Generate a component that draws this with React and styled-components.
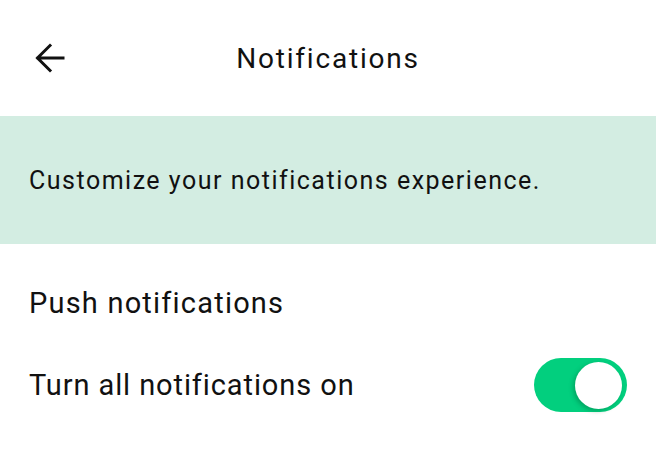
import styled, { createGlobalStyle } from "styled-components";

const GlobalStyle = createGlobalStyle`
  body {
    margin: 0;
    background: #fff;
    font-family: Roboto, "Liberation Sans", sans-serif;
    color: #111;
  }
`;

const Screen = styled.div`
  display: flex;
  flex-direction: column;
  width: 656px;
  height: 476px;
  background: #fff;
`;

const Header = styled.header`
  display: grid;
  grid-template-columns: 80px 1fr 80px;
  align-items: center;
  height: 116px;
`;

const BackButton = styled.button`
  display: flex;
  align-items: center;
  justify-content: center;
  width: 44px;
  height: 44px;
  margin-left: 28px;
  padding: 0;
  border: none;
  background: none;
  color: #111;
`;

const Title = styled.h1`
  margin: 0;
  text-align: center;
  font-size: 28px;
  font-weight: 400;
  letter-spacing: 1.8px;
`;

const Banner = styled.div`
  display: flex;
  align-items: center;
  height: 128px;
  padding: 0 29px;
  background: #d3ede2;
  font-size: 25px;
  letter-spacing: 1.5px;
`;

const Section = styled.section`
  display: flex;
  flex-direction: column;
  padding: 0 29px;
`;

const SectionTitle = styled.h2`
  margin: 42px 0 0;
  font-size: 29px;
  font-weight: 400;
  letter-spacing: 1.2px;
`;

const Row = styled.div`
  display: flex;
  align-items: center;
  justify-content: space-between;
  margin-top: 38px;
`;

const Label = styled.span`
  font-size: 29px;
  letter-spacing: 0.9px;
`;

const Switch = styled.div`
  position: relative;
  width: 93px;
  height: 54px;
  border-radius: 27px;
  background: ${(p) => (p.$on ? "#02cf7e" : "#c9c9c9")};
`;

const Knob = styled.span`
  position: absolute;
  top: 4px;
  left: ${(p) => (p.$on ? "41px" : "4px")};
  width: 47px;
  height: 47px;
  border-radius: 50%;
  background: #fff;
  box-shadow: -2px 2px 4px rgba(0, 90, 50, 0.35);
`;

function ArrowLeft() {
  return (
    <svg width="30" height="30" viewBox="0 0 30 30" fill="none">
      <path
        d="M28 15H3M15 2.5L2.5 15L15 27.5"
        stroke="currentColor"
        strokeWidth="3"
        strokeLinecap="square"
      />
    </svg>
  );
}

export default function App() {
  return (
    <Screen>
      <GlobalStyle />
      <Header>
        <BackButton>
          <ArrowLeft />
        </BackButton>
        <Title>Notifications</Title>
        <span />
      </Header>
      <Banner>Customize your notifications experience.</Banner>
      <Section>
        <SectionTitle>Push notifications</SectionTitle>
        <Row>
          <Label>Turn all notifications on</Label>
          <Switch $on>
            <Knob $on />
          </Switch>
        </Row>
      </Section>
    </Screen>
  );
}
